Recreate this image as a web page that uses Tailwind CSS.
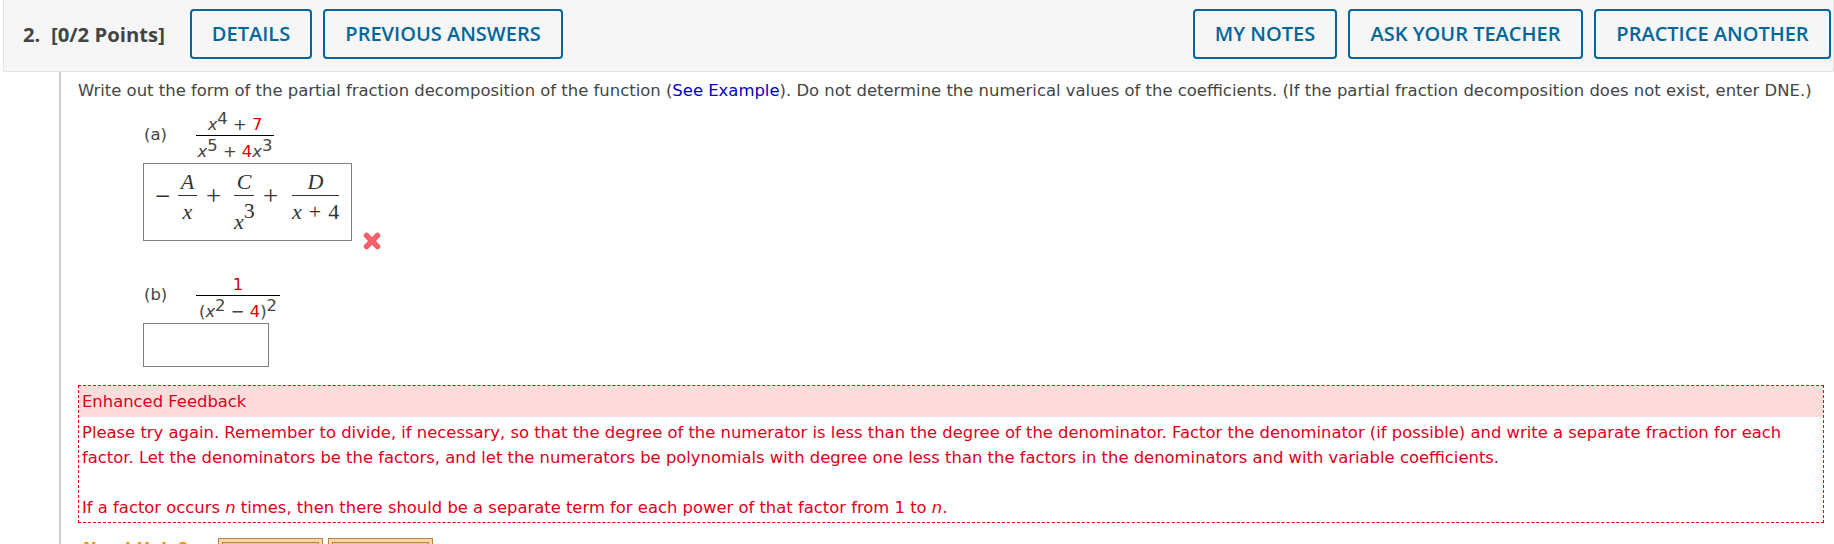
<!DOCTYPE html>
<html lang="en">
<head>
    <meta charset="UTF-8">
    <title>Question 2</title>
    <script src="https://cdn.jsdelivr.net/npm/@tailwindcss/browser@4"></script>
</head>
<body class="bg-white overflow-hidden h-[544px] font-['DejaVu_Sans',sans-serif] text-[16.45px] text-[#444]">
    <!-- Question header -->
    <div class="ml-[3px] h-[72px] bg-[#f6f6f6] border border-[#e2e2e2] border-t-0 rounded-b-[2px] pl-[19px] pr-[2px] pb-[3px] flex items-center font-['Open_Sans',sans-serif]">
        <span class="w-[167px] text-[20.3px] font-bold text-[#444] whitespace-pre">2.  [0/2 Points]</span>
        <div class="flex gap-[11px]">
            <button class="h-[50px] w-[122px] border-2 border-[#00669c] rounded-[4px] text-[20px] font-semibold text-[#00669c]">DETAILS</button>
            <button class="h-[50px] w-[240px] border-2 border-[#00669c] rounded-[4px] text-[20px] font-semibold text-[#00669c]">PREVIOUS ANSWERS</button>
        </div>
        <div class="ml-auto flex gap-[11px]">
            <button class="h-[50px] w-[144px] border-2 border-[#00669c] rounded-[4px] text-[20px] font-semibold text-[#00669c]">MY NOTES</button>
            <button class="h-[50px] w-[235px] border-2 border-[#00669c] rounded-[4px] text-[20px] font-semibold text-[#00669c]">ASK YOUR TEACHER</button>
            <button class="h-[50px] w-[237px] border-2 border-[#00669c] rounded-[4px] text-[20px] font-semibold text-[#00669c]">PRACTICE ANOTHER</button>
        </div>
    </div>

    <!-- Question body -->
    <div class="ml-[59px] border-l-2 border-[#ccc] pl-[17px] h-[472px]">
        <p class="pt-[9px] leading-[20px] whitespace-nowrap">Write out the form of the partial fraction decomposition of the function (<a class="text-[#0000cc]">See Example</a>). Do not determine the numerical values of the coefficients. (If the partial fraction decomposition does not exist, enter DNE.)</p>

        <!-- Part a -->
        <div class="pl-[65px] mt-[11px]">
            <div class="flex items-start h-[51px]">
                <span class="w-[53px] pl-[1px] pt-[13px] leading-[20px]">(a)</span>
                <div class="flex flex-col text-center w-[78px] text-[16.4px] leading-[20px]">
                    <span class="border-b border-black h-[24px] pt-[3px] whitespace-nowrap"><i>x</i><sup class="text-[16.4px] -top-[6px]">4</sup> + <span class="text-[#d00]">7</span></span>
                    <span class="pt-[6px] whitespace-nowrap"><i>x</i><sup class="text-[16.4px] -top-[6px]">5</sup> + <span class="text-[#d00]">4</span><i>x</i><sup class="text-[16.4px] -top-[6px]">3</sup></span>
                </div>
            </div>
            <div class="flex items-end">
                <div class="w-[209px] h-[78px] border border-[#808080] flex items-start pl-[11px] pt-[5px] font-['Liberation_Serif',serif] text-[22px] text-[#333]">
                    <span class="w-[15px] mt-[14px] mr-[8px] text-center text-[27px] leading-[26px]">&minus;</span>
                    <div class="flex flex-col text-center w-[19px]">
                        <i class="border-b border-[#333] h-[27px] leading-[26px]">A</i><i class="leading-[32px]">x</i>
                    </div>
                    <span class="w-[15px] mt-[14px] ml-[9px] mr-[13px] text-center text-[27px] leading-[26px]">+</span>
                    <div class="flex flex-col text-center w-[20px]">
                        <i class="border-b border-[#333] h-[27px] leading-[26px]">C</i><span class="pt-[9px] leading-[34px] whitespace-nowrap"><i>x</i><sup class="text-[22px] -top-[11px]">3</sup></span>
                    </div>
                    <span class="w-[15px] mt-[14px] ml-[9px] mr-[14px] text-center text-[27px] leading-[26px]">+</span>
                    <div class="flex flex-col text-center w-[47px]">
                        <i class="border-b border-[#333] h-[27px] leading-[26px]">D</i><span class="leading-[32px] whitespace-nowrap [word-spacing:1.5px]"><i>x</i> + 4</span>
                    </div>
                </div>
                <svg class="ml-[11px] mb-[-9px]" width="18" height="18" viewBox="0 0 18 18"><path d="M3.5 3.5 L14.5 14.5 M14.5 3.5 L3.5 14.5" stroke="#f4606c" stroke-width="5.5" stroke-linecap="round"/></svg>
            </div>
        </div>

        <!-- Part b -->
        <div class="pl-[65px] mt-[31px]">
            <div class="flex items-start h-[51px]">
                <span class="w-[53px] pl-[1px] pt-[13px] leading-[20px]">(b)</span>
                <div class="flex flex-col text-center w-[84px] text-[16.4px] leading-[20px]">
                    <span class="border-b border-black h-[24px] pt-[3px] text-[#d00]">1</span>
                    <span class="pt-[6px] whitespace-nowrap">(<i>x</i><sup class="text-[16.4px] -top-[6px]">2</sup> &minus; <span class="text-[#d00]">4</span>)<sup class="text-[16.4px] -top-[6px]">2</sup></span>
                </div>
            </div>
            <div class="w-[126px] h-[44px] border border-[#808080]"></div>
        </div>

        <!-- Enhanced feedback -->
        <div class="mt-[18px] w-[1746px] h-[138px] border border-dashed border-[#e00] text-[16.4px] text-[#e0001b] leading-[25px]">
            <div class="bg-[#ffdcdc] h-[31px] pl-[3px] pt-[3px]">Enhanced Feedback</div>
            <div class="pl-[3px] pt-[3px]">
                <p class="whitespace-nowrap">Please try again. Remember to divide, if necessary, so that the degree of the numerator is less than the degree of the denominator. Factor the denominator (if possible) and write a separate fraction for each</p>
                <p class="whitespace-nowrap">factor. Let the denominators be the factors, and let the numerators be polynomials with degree one less than the factors in the denominators and with variable coefficients.</p>
                <p class="whitespace-nowrap mt-[25px]">If a factor occurs <i>n</i> times, then there should be a separate term for each power of that factor from 1 to <i>n</i>.</p>
            </div>
        </div>

        <!-- Need help row, cut by the bottom of the window -->
        <div class="flex items-start mt-[15px] h-[6px] overflow-hidden">
            <span class="text-[#f39200] font-bold text-[16.4px] leading-[22px] pl-[5px] w-[140px] whitespace-nowrap">Need Help?</span>
            <span class="w-[105px] h-[24px] bg-[#fdd3a8] border border-[#b78443] p-[3px]"><span class="block h-full border border-[#b78443] bg-[#eec795]"></span></span>
            <span class="w-[105px] h-[24px] ml-[5px] bg-[#fdd3a8] border border-[#b78443] p-[3px]"><span class="block h-full border border-[#b78443] bg-[#eec795]"></span></span>
        </div>
    </div>
</body>
</html>
